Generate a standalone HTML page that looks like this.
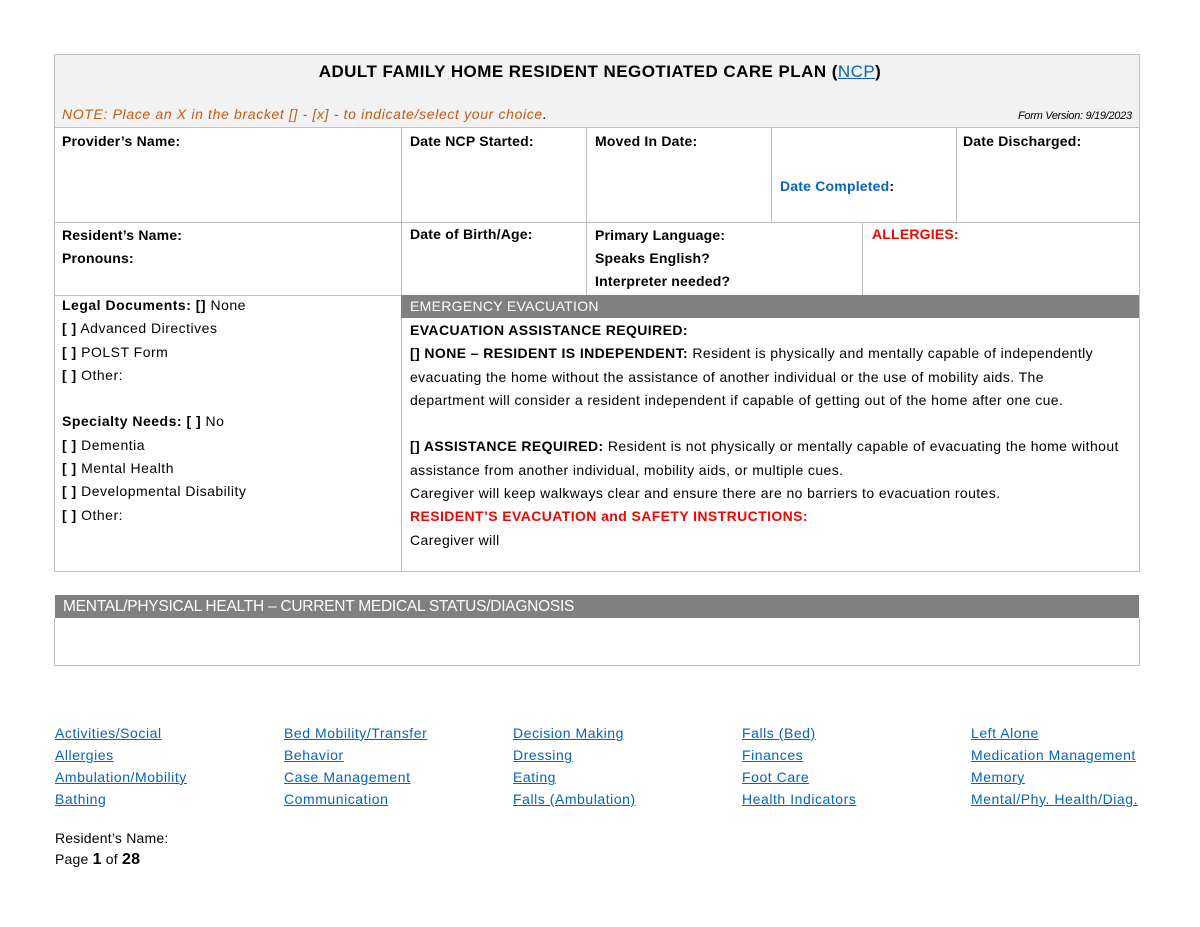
<!DOCTYPE html><html><head><style>
body{margin:0;width:1200px;height:927px;background:#fff;font-family:"Liberation Sans",sans-serif;color:#000;position:relative;overflow:hidden}
.a{position:absolute;white-space:nowrap}
.b{font-weight:bold}
.t{font-size:14px;letter-spacing:0.2px}
.bx{position:absolute;border:1px solid #c0c0c0;box-sizing:border-box}
.vl{position:absolute;width:1px;background:#c0c0c0}
.hl{position:absolute;height:1px;background:#c0c0c0}
.bar{position:absolute;background:#808080;color:#fff;font-size:14px;letter-spacing:0.3px}
.lk{position:absolute;color:#0563c1;text-decoration:underline;font-size:14px;letter-spacing:0.55px;white-space:nowrap}
</style></head><body>
<div class="bx" style="left:54px;top:54px;width:1086px;height:518px"></div>
<div class="a" style="left:55px;top:55px;width:1084px;height:72px;background:#f2f2f2"></div>
<div class="a b" style="left:0;width:1200px;text-align:center;top:62px;font-size:17px;letter-spacing:0.45px">ADULT FAMILY HOME RESIDENT NEGOTIATED CARE PLAN (<span style="color:#0563c1;text-decoration:underline;font-weight:normal">NCP</span>)</div>
<div class="a" style="left:62px;top:106px;font-size:14px;font-style:italic;color:#c55a11;letter-spacing:0.65px">NOTE: Place an X in the bracket [] - [x] - to indicate/select your choice<span style="color:#000">.</span></div>
<div class="a" style="left:1018px;top:110px;font-size:11px;font-style:italic;letter-spacing:-0.3px">Form Version: 9/19/2023</div>
<div class="hl" style="left:55px;top:127px;width:1084px"></div>
<div class="hl" style="left:55px;top:222px;width:1084px"></div>
<div class="hl" style="left:55px;top:295px;width:1084px"></div>
<div class="vl" style="left:401px;top:127px;height:444px"></div>
<div class="vl" style="left:586px;top:127px;height:168px"></div>
<div class="vl" style="left:771px;top:127px;height:95px"></div>
<div class="vl" style="left:956px;top:127px;height:95px"></div>
<div class="vl" style="left:862px;top:222px;height:73px"></div>
<div class="a b t" style="left:62px;top:133px">Provider’s Name:</div>
<div class="a b t" style="left:410px;top:133px">Date NCP Started:</div>
<div class="a b t" style="left:595px;top:133px">Moved In Date:</div>
<div class="a b t" style="left:780px;top:178px;color:#0563c1">Date Completed<span style="color:#000">:</span></div>
<div class="a b t" style="left:963px;top:133px">Date Discharged:</div>
<div class="a b t" style="left:62px;top:224px;line-height:23px">Resident’s Name:<br>Pronouns:</div>
<div class="a b t" style="left:410px;top:226px">Date of Birth/Age:</div>
<div class="a b t" style="left:595px;top:224px;line-height:23px">Primary Language:<br>Speaks English?<br>Interpreter needed?</div>
<div class="a b t" style="left:872px;top:226px;color:#ff0000">ALLERGIES:</div>
<div class="a t" style="left:62px;top:294px;line-height:23.3px;letter-spacing:0.5px"><b>Legal Documents: []</b> None<br><b>[ ]</b> Advanced Directives<br><b>[ ]</b> POLST Form<br><b>[ ]</b> Other:<br><br><b>Specialty Needs: [ ]</b> No<br><b>[ ]</b> Dementia<br><b>[ ]</b> Mental Health<br><b>[ ]</b> Developmental Disability<br><b>[ ]</b> Other:</div>
<div class="bar" style="left:401px;top:295px;width:738px;height:23px;line-height:23px;padding-left:9px;box-sizing:border-box">EMERGENCY EVACUATION</div>
<div class="a t" style="left:410px;top:319px;line-height:23.3px;font-size:14px;letter-spacing:0.4px"><b>EVACUATION ASSISTANCE REQUIRED:</b><br><b>[] NONE – RESIDENT IS INDEPENDENT:</b> Resident is physically and mentally capable of independently<br>evacuating the home without the assistance of another individual or the use of mobility aids. The<br>department will consider a resident independent if capable of getting out of the home after one cue.<br><br><b>[] ASSISTANCE REQUIRED:</b> Resident is not physically or mentally capable of evacuating the home without<br>assistance from another individual, mobility aids, or multiple cues.<br>Caregiver will keep walkways clear and ensure there are no barriers to evacuation routes.<br><b style="color:#ff0000">RESIDENT’S EVACUATION and SAFETY INSTRUCTIONS:</b><br>Caregiver will</div>
<div class="bar" style="left:55px;top:595px;width:1084px;height:23px;line-height:23px;padding-left:8px;box-sizing:border-box;font-size:15.5px;letter-spacing:-0.25px">MENTAL/PHYSICAL HEALTH – CURRENT MEDICAL STATUS/DIAGNOSIS</div>
<div class="bx" style="left:54px;top:618px;width:1086px;height:48px;border-top:none"></div>
<div class="lk" style="left:55px;top:722px;line-height:22px">Activities/Social<br>Allergies<br>Ambulation/Mobility<br>Bathing</div>
<div class="lk" style="left:284px;top:722px;line-height:22px">Bed Mobility/Transfer<br>Behavior<br>Case Management<br>Communication</div>
<div class="lk" style="left:513px;top:722px;line-height:22px">Decision Making<br>Dressing<br>Eating<br>Falls (Ambulation)</div>
<div class="lk" style="left:742px;top:722px;line-height:22px">Falls (Bed)<br>Finances<br>Foot Care<br>Health Indicators</div>
<div class="lk" style="left:971px;top:722px;line-height:22px">Left Alone<br>Medication Management<br>Memory<br>Mental/Phy. Health/Diag.</div>
<div class="a t" style="left:55px;top:830px">Resident’s Name:</div>
<div class="a t" style="left:55px;top:851px">Page <b style="font-size:16px">1</b> of <b style="font-size:16px">28</b></div>
</body></html>
